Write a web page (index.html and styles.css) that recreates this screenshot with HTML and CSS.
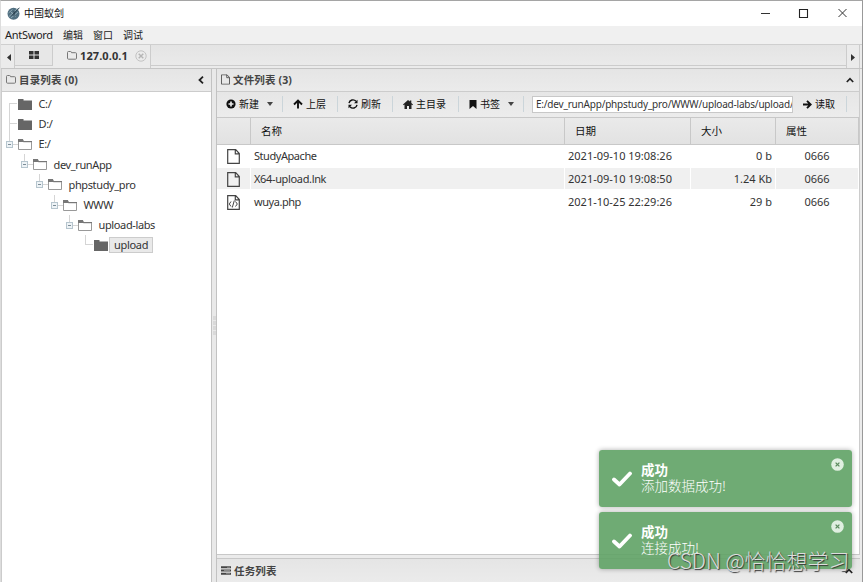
FILE: index.html
```html
<!DOCTYPE html>
<html lang="zh-CN">
<head>
<meta charset="utf-8">
<title>中国蚁剑</title>
<link rel="stylesheet" href="styles.css">
</head>
<body>
<svg class="defs" width="0" height="0">
  <symbol id="folder-open" viewBox="0 0 14 11"><path d="M.5 10.5V1h4.8v1.8h8.2v7.7z" fill="#fff" stroke="#999"/><path d="M0 0h5v2h9v1H0z" fill="#777"/></symbol>
  <symbol id="folder-solid" viewBox="0 0 14 11"><path d="M0 0h5.5v1.6H14V11H0z" fill="#666"/></symbol>
  <symbol id="folder-line" viewBox="0 0 10 9"><path d="M.5 1.5q0-1 1-1h2q1 0 1 1.2h4q1 0 1 1v4.500q0 1-1 1h-7q-1 0-1-1z" fill="none" stroke="#777"/></symbol>
  <symbol id="file" viewBox="0 0 13 15"><path d="M.7.7h8l3.6 3.8v9.8H.7zM8.3.7v4.2h4" fill="none" stroke="#444" stroke-width="1.2"/></symbol>
  <symbol id="check" viewBox="0 0 20 16"><path d="M2 8.5l5.5 5L18 2.5" fill="none" stroke="#fff" stroke-width="3.8" stroke-linecap="round" stroke-linejoin="round"/></symbol>
  <symbol id="close-dot" viewBox="0 0 13 13"><circle cx="6.5" cy="6.5" r="6.3" fill="#e0efe1"/><path d="M4.6 4.6l3.8 3.8m0-3.8L4.6 8.4" stroke="#5b8b5e" stroke-width="1.3"/></symbol>
</svg>
<div class="window">
  <header class="titlebar">
    <svg class="logo" viewBox="0 0 13 13"><circle cx="6.5" cy="6.7" r="6" fill="#506f80"/><path d="M2 9.5L10.5 1.5M4 11l7-6M1.5 6l4-3.5M3.5 4.5l5 5" stroke="#8fa8b4"/><path d="M5 8.5L12.5.7M7 4v5" stroke="#253d4b"/></svg>
    <span class="app-name">中国蚁剑</span>
    <svg class="controls" viewBox="0 0 88 12"><path d="M1 6.5h9M78.5 2l8 8m0-8l-8 8" stroke="#333" fill="none"/><path d="M39.5 2.5h8v8h-8z" fill="none" stroke="#222" stroke-width="1.1"/></svg>
  </header>
  <nav class="menu"><span class="m-app">AntSword</span><span>编辑</span><span>窗口</span><span>调试</span></nav>
  <div class="tabs">
    <div class="arrow"><svg width="5" height="7"><path d="M5 0v7L1 3.5z" fill="#333"/></svg></div>
    <div class="tab home"><svg width="10" height="8"><path d="M0 0h4.5v3.4H0zM5.5 0H10v3.4H5.5zM0 4.6h4.5V8H0zM5.5 4.6H10V8H5.5z" fill="#333"/></svg></div>
    <div class="tab active"><svg width="10" height="9"><use href="#folder-line"/></svg><b>127.0.0.1</b><svg class="tab-close" width="12" height="12"><circle cx="6" cy="6" r="5.2" fill="none" stroke="#c3c3c3"/><path d="M3.7 3.7l4.6 4.6m0-4.6L3.7 8.3" stroke="#b5b5b5" stroke-width="1.4"/></svg></div>
    <div class="tab-rest"></div>
    <div class="arrow end"><svg width="5" height="7"><path d="M0 0v7l4-3.5z" fill="#333"/></svg></div>
  </div>
  <main class="body">
    <aside class="sidebar">
      <div class="panel-head"><svg width="10" height="9"><use href="#folder-line"/></svg><b>目录列表 (0)</b><svg class="collapse" width="6" height="8"><path d="M5 .7L1.5 4 5 7.3" fill="none" stroke="#222" stroke-width="1.8"/></svg></div>
      <ul class="tree">
        <li class="lv0 top"><i class="line"></i><svg width="14" height="11"><use href="#folder-solid"/></svg><span>C:/</span></li>
        <li class="lv0"><i class="line"></i><svg width="14" height="11"><use href="#folder-solid"/></svg><span>D:/</span></li>
        <li class="lv0"><i class="minus"></i><svg width="14" height="11"><use href="#folder-open"/></svg><span>E:/</span></li>
        <li class="lv1"><i class="minus"></i><svg width="14" height="11"><use href="#folder-open"/></svg><span>dev_runApp</span></li>
        <li class="lv2"><i class="minus"></i><svg width="14" height="11"><use href="#folder-open"/></svg><span>phpstudy_pro</span></li>
        <li class="lv3"><i class="minus"></i><svg width="14" height="11"><use href="#folder-open"/></svg><span>WWW</span></li>
        <li class="lv4"><i class="minus"></i><svg width="14" height="11"><use href="#folder-open"/></svg><span>upload-labs</span></li>
        <li class="lv5"><i class="line last"></i><svg width="14" height="11"><use href="#folder-solid"/></svg><span class="selected">upload</span></li>
      </ul>
    </aside>
    <div class="splitter"><i></i><i></i><i></i><i></i></div>
    <section class="content">
      <div class="files">
        <div class="panel-head"><svg width="9" height="11" viewBox="0 0 13 15"><use href="#file"/></svg><b>文件列表 (3)</b><svg class="collapse" width="8" height="6"><path d="M.8 5L4 1.7 7.2 5" fill="none" stroke="#222" stroke-width="1.7"/></svg></div>
        <div class="toolbar">
          <div class="tool new"><svg width="10" height="10"><circle cx="5" cy="5" r="4.6" fill="#111"/><path d="M5 2.5v5M2.5 5h5" stroke="#e8e8e8" stroke-width="1.7"/></svg><span>新建</span><i class="caret"></i></div>
          <div class="tool up"><svg width="10" height="10"><path d="M5 9.5V2M1 5.5l4-4 4 4" fill="none" stroke="#111" stroke-width="1.9"/></svg><span>上层</span></div>
          <div class="tool refresh"><svg width="10" height="10"><path d="M1 4.2A4 4 0 0 1 8 2.3M9 5.8A4 4 0 0 1 2 7.7" fill="none" stroke="#111" stroke-width="1.4"/><path d="M9.5.8v3.5H6zM.5 9.2V5.7H4z" fill="#111"/></svg><span>刷新</span></div>
          <div class="tool root"><svg width="10" height="9"><path d="M0 4.5L5 0l1.8 1.6V.5h1.5v2.4L10 4.5l-.7.7-.8-.6V9H6V6H4v3H1.500V4.600l-.8.600z" fill="#222"/></svg><span>主目录</span></div>
          <div class="tool mark"><svg width="8" height="9"><path d="M.5 0h7v9L4 6 .5 9z" fill="#111"/></svg><span>书签</span><i class="caret"></i></div>
          <div class="path">E:/dev_runApp/phpstudy_pro/WWW/upload-labs/upload/</div>
          <div class="tool read"><svg width="9" height="9"><path d="M0 4.5h7.5M4 .8l3.7 3.7L4 8.2" fill="none" stroke="#111" stroke-width="1.9"/></svg><span>读取</span></div>
        </div>
        <div class="row head"><span></span><span>名称</span><span>日期</span><span>大小</span><span>属性</span></div>
        <div class="row"><span class="ico"><svg width="13" height="15"><use href="#file"/></svg></span><span class="name">StudyApache</span><span>2021-09-10 19:08:26</span><span class="size">0 b</span><span class="attr">0666</span></div>
        <div class="row alt"><span class="ico"><svg width="13" height="15"><use href="#file"/></svg></span><span class="name link">X64-upload.lnk</span><span>2021-09-10 19:08:50</span><span class="size">1.24 Kb</span><span class="attr">0666</span></div>
        <div class="row"><span class="ico"><svg width="13" height="15"><use href="#file"/><path d="M4 6.5L2.3 9 4 11.5m4.5-5L10.3 9l-1.8 2.5M7.3 5.5l-2 7" fill="none" stroke="#444"/></svg></span><span class="name php">wuya.php</span><span>2021-10-25 22:29:26</span><span class="size">29 b</span><span class="attr">0666</span></div>
      </div>
      <div class="panel-head tasks"><svg width="10" height="9"><path d="M0 1.3h10M0 4.5h10M0 7.7h10" stroke="#444" stroke-width="2"/><path d="M6 1.3h3M3 4.5h6M5 7.7h4" stroke="#999" stroke-width=".8"/></svg><b>任务列表</b><svg class="collapse" width="8" height="6"><path d="M.8 5L4 1.7 7.2 5" fill="none" stroke="#222" stroke-width="1.7"/></svg></div>
    </section>
  </main>
</div>
<div class="toasts">
  <div class="toast"><svg class="check" width="20" height="16"><use href="#check"/></svg><div class="msg"><b>成功</b><p>添加数据成功!</p></div><svg class="dismiss" width="13" height="13"><use href="#close-dot"/></svg></div>
  <div class="toast"><svg class="check" width="20" height="16"><use href="#check"/></svg><div class="msg"><b>成功</b><p>连接成功!</p></div><svg class="dismiss" width="13" height="13"><use href="#close-dot"/></svg></div>
</div>
<div class="watermark">CSDN @恰恰想学习</div>
</body>
</html>
```
FILE: styles.css
```css
* { box-sizing: border-box; }
body { margin: 0; overflow: hidden; font: 11px/16px "Noto Sans", "Noto Sans CJK SC", sans-serif; color: #333; }
svg { display: block; flex: none; }
.defs { position: absolute; }
.window { height: 582px; display: flex; flex-direction: column; background: #ebebeb; border-top: 1px solid #a5a5a5; border-right: 1px solid #999; border-left: 1px solid #ddd; }
.titlebar { height: 25px; flex: none; display: flex; align-items: center; background: #fff; padding: 0 14px 1px 6px; color: #111; font-size: 10px; }
.logo { width: 13px; height: 13px; margin-right: 4px; }
.controls { width: 88px; height: 12px; margin-left: auto; }
.menu { height: 18px; flex: none; display: flex; align-items: center; gap: 10px; padding-left: 4px; background: #f0f0f0; font-size: 10px; color: #222; }
.m-app { font-size: 11px; width: 48px; letter-spacing: -.3px; }
.tabs { height: 24px; flex: none; display: flex; background: #ebebeb; border-top: 1px solid #cfcfcf; padding-right: 2px; }
.arrow { width: 14px; display: flex; align-items: center; justify-content: center; border-right: 1px solid #ccc; padding: 2px 0 0 1px; }
.arrow.end { border-left: 1px solid #ccc; }
.tab { display: flex; align-items: center; height: 23px; }
.home { width: 38px; height: 21px; justify-content: center; border-right: 1px solid #ccc; border-bottom: 1px solid #ccc; background: #e7e7e7; }
.active { width: 98px; padding: 0 0 2px 14px; border-right: 1px solid #ccc; }
.active b { width: 49px; margin: 0 6px 0 3px; letter-spacing: .1px; }
.tab-rest { flex: 1; height: 21px; border-bottom: 1px solid #ccc; background: linear-gradient(#e4e4e4, #eaeaea); }
.body { flex: 1; min-height: 0; display: flex; border-top: 1px solid #c5c5c5; }
.sidebar { width: 210px; flex: none; background: #fff; border-left: 1px solid #ccc; }
.panel-head { height: 23px; display: flex; align-items: center; padding: 0 7px 1px 4px; background: linear-gradient(#e5e5e5, #ebebeb); border-bottom: 1px solid #ccc; }
.panel-head b { margin-left: 3px; font-size: 10.5px; letter-spacing: .15px; color: #444; }
.panel-head .collapse { margin-left: auto; }
.tree { margin: 0; padding: 2px 0 0 4px; list-style: none; }
.tree li { height: 20.2px; display: flex; align-items: center; }
.tree svg { margin-left: 5px; }
.tree span { margin-left: 6.5px; letter-spacing: -.37px; }
.minus { width: 7px; height: 7px; position: relative; border: 1px solid #b6c5ce; background: linear-gradient(#7c8d98, #7c8d98) center / 3px 1px no-repeat #eef3f6; }
.minus::before { content: ""; position: absolute; left: 2px; top: -8px; height: 7px; border-left: 1px solid #d5d5d5; }
.minus::after { content: ""; position: absolute; left: 6px; top: 2px; width: 5px; border-top: 1px solid #d5d5d5; }
.line { width: 7px; height: 20px; position: relative; }
.line::before { content: ""; position: absolute; left: 3px; top: 0; height: 20px; border-left: 1px solid #d5d5d5; }
.line::after { content: ""; position: absolute; left: 3px; top: 9px; width: 8px; border-top: 1px solid #d5d5d5; }
.top .line::before { top: 9px; height: 11px; }
.line.last::before { height: 10px; }
.lv1 { padding-left: 15px; }
.lv2 { padding-left: 30px; }
.lv3 { padding-left: 45px; }
.lv4 { padding-left: 60px; }
.lv5 { padding-left: 76px; }
.tree .selected { margin-left: 1px; padding: 0 4px; line-height: 14px; letter-spacing: -.3px; border: 1px solid #ccc; background: #e9e9e9; }
.splitter { width: 6px; flex: none; display: flex; flex-direction: column; align-items: center; justify-content: center; gap: 1px; border: solid #c2c2c2; border-width: 0 1px; background: #e9e9e9; }
.splitter i { width: 3px; height: 4px; background: #d9d9d9; }
.content { flex: 1; min-width: 0; margin-right: 2px; display: flex; flex-direction: column; }
.files { height: 486px; flex: none; background: #fff; border-right: 1px solid #ccc; border-bottom: 1px solid #c8c8c8; }
.files .collapse { margin-right: -2px; }
.toolbar { height: 26px; display: flex; align-items: center; padding-bottom: 1px; background: linear-gradient(#e6e6e6, #ececec); border-bottom: 1px solid #c8c8c8; color: #111; font-size: 10px; }
.tool { display: flex; align-items: center; height: 16px; border-right: 1px solid #cbd5da; }
.tool span { margin-left: 3px; }
.caret { border: 3px solid transparent; border-top: 4px solid #444; border-bottom: 0; margin-left: 8px; }
.new { width: 66px; padding-left: 9px; }
.up { width: 55px; padding-left: 10px; }
.refresh { width: 55px; padding-left: 10px; }
.root { width: 66px; padding-left: 10px; }
.mark { width: 65px; padding-left: 10px; }
.path { width: 261px; height: 17px; margin-left: 8px; padding: 0 0 0 3px; overflow: hidden; white-space: nowrap; border: 1px solid #c8c8c8; background: #fff; color: #333; line-height: 15px; letter-spacing: -.2px; }
.read { width: 54px; padding-left: 10px; }
.row { height: 23px; display: grid; grid-template-columns: 34px 314px 126px 85px 1fr; }
.row > span { display: flex; align-items: center; padding: 0 0 1px 3px; border-right: 1px solid #fff; }
.row > .ico { padding-left: 10px; }
.row > .name { letter-spacing: -.45px; }
.row > .link { letter-spacing: -.35px; }
.row > .php { letter-spacing: -.45px; }
.row > .size { justify-content: flex-end; padding-right: 3px; }
.row > .attr { justify-content: center; padding: 0 0 1px; }
.row.head { height: 27px; background: linear-gradient(#eaeaea, #e2e2e2); border-bottom: 1px solid #c8c8c8; color: #111; font-size: 10.5px; }
.head > span { padding: 0 0 0 10px; border-right-color: #c8c8c8; }
.alt { background: linear-gradient(#f0f0f0, #f0f0f0) 0 0 / 100% 21px no-repeat; }
.tasks { height: 25px; margin-top: 3px; padding-bottom: 0; border-top: 1px solid #c8c8c8; border-bottom: 0; }
.toasts { position: absolute; left: 599px; top: 450px; display: grid; gap: 5px; }
.toast { width: 253px; height: 57px; display: flex; align-items: flex-start; padding: 11px 8px 0 13px; border-radius: 3px; background: rgba(97, 163, 102, .91); box-shadow: 0 0 5px rgba(0, 0, 0, .32); color: #fff; font-family: "Noto Sans CJK SC", sans-serif; }
.check { margin-top: 10px; }
.msg { margin-left: 9px; font-size: 13.5px; line-height: 16px; }
.msg b { display: block; }
.msg p { margin: 0; font-weight: 300; }
.dismiss { margin: -3px 0 0 auto; }
.watermark { position: absolute; left: 667px; top: 546px; font: 300 21px/28px "Noto Sans CJK SC", sans-serif; color: #ddd; text-shadow: 1px 1px 1px #333; white-space: nowrap; }
```
